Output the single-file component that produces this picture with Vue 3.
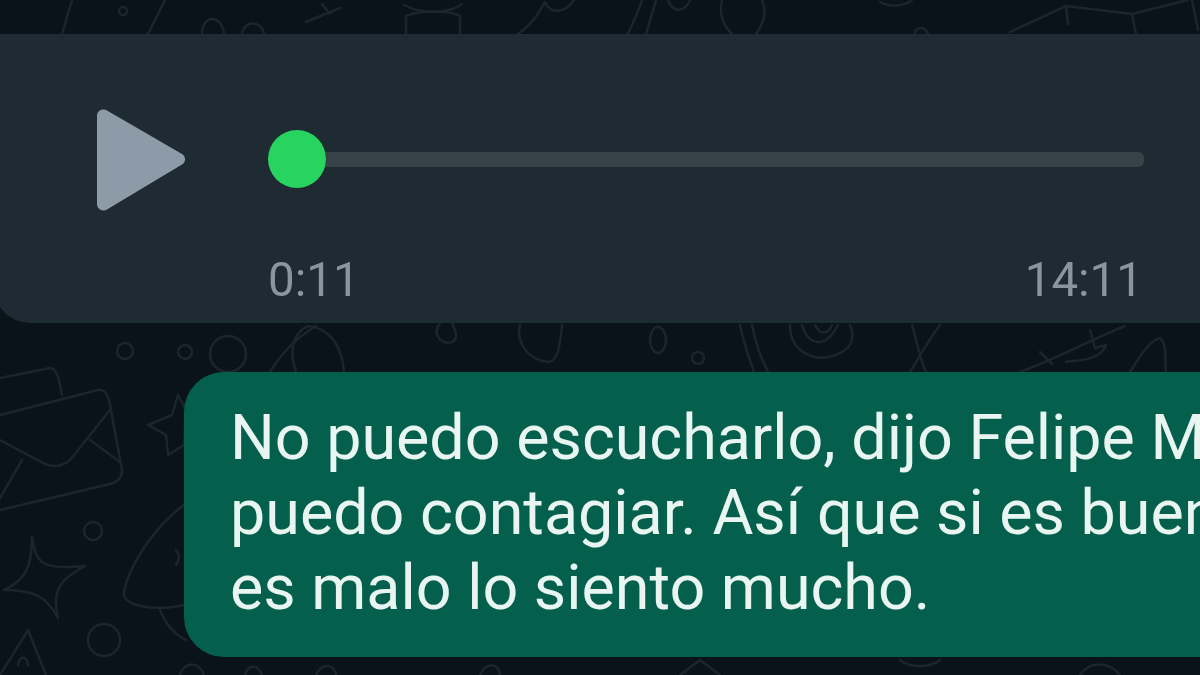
<template>
  <main class="chat">
    <svg class="doodles" viewBox="0 0 1200 675" xmlns="http://www.w3.org/2000/svg" fill="none">
      <!-- top strip -->
      <path d="M72 0L62 34M165 0L148 34" />
      <circle cx="123" cy="11" r="4" />
      <path d="M202 34C202 14 222 14 224 34M242 34C244 20 262 20 264 34" />
      <path d="M306 22L340 8M322 4L330 14" />
      <path d="M406 34V16C420 10 450 10 460 16V34M404 5C420 14 450 14 462 4" />
      <path d="M518 34C535 22 540 10 545 2C550 14 565 14 574 0" />
      <path d="M628 34C634 20 640 8 642 0M646 34C650 20 654 8 656 0M668 0C672 12 684 14 690 0" />
      <path d="M722 0C718 16 724 26 732 34M762 0C768 14 762 26 756 34" />
      <path d="M880 2C890 8 905 6 912 0M915 34C915 26 925 26 928 34" />
      <path d="M1010 32L1066 6L1132 14L1188 0M1066 6L1068 24M1132 14L1136 34M1192 0L1198 30" />
      <!-- strip between the two bubbles -->
      <circle cx="125" cy="351" r="8" />
      <circle cx="185" cy="352" r="7" />
      <circle cx="228" cy="354" r="18" />
      <path d="M270 372C282 352 296 338 316 326M296 372C288 350 294 332 308 326C330 328 342 346 344 372" />
      <path d="M440 323C430 336 445 346 452 342C460 338 454 328 452 323" />
      <path d="M520 325C516 340 526 360 548 362C558 362 560 345 562 325" />
      <ellipse cx="658" cy="340" rx="8" ry="13" />
      <circle cx="698" cy="358" r="6" />
      <path d="M740 325C744 345 750 360 754 372M752 325C756 345 762 360 768 372" />
      <path d="M790 325C790 352 815 364 838 354C858 346 852 330 850 325M802 325C808 345 825 350 838 325M815 325C820 335 828 335 832 325" />
      <path d="M912 325C918 345 920 360 926 372M940 325C925 345 918 360 910 372" />
      <path d="M1020 372C1050 362 1090 340 1125 326M1040 352L1052 364M1066 362C1074 360 1100 362 1106 345L1095 348L1090 330" />
      <path d="M1130 372C1140 356 1150 340 1160 338C1168 345 1164 360 1166 372" />
      <!-- left column -->
      <path d="M0 378L50 368C58 368 60 385 62 395" />
      <path d="M0 415L98 390C106 389 108 396 110 405L122 470C122 478 118 482 110 484L0 510" />
      <path d="M0 440L45 464C55 468 62 466 70 460L110 410M22 460L0 498M90 440L120 462" />
      <path d="M148 425L172 415L178 395L186 410L184 445L168 455L166 435Z" />
      <circle cx="93" cy="531" r="9" />
      <path d="M32 537C36 565 44 570 85 566C58 580 52 592 58 618C46 596 34 590 4 590C26 580 32 566 32 537Z" />
      <circle cx="104" cy="640" r="16" />
      <path d="M0 675L28 630L46 675M18 665C20 655 26 655 28 665" />
      <path d="M184 505C150 530 128 570 124 592C122 605 150 612 184 605M160 610C166 625 176 635 186 640M176 550C180 555 180 560 176 565" />
      <!-- bottom strip -->
      <path d="M180 675C184 662 198 660 204 675M245 675C248 664 258 664 262 675M316 675C322 662 334 664 336 675" />
      <path d="M480 675C486 662 498 662 500 675M680 675L700 660L720 675M900 660C910 668 930 668 940 660M1080 675C1090 660 1110 662 1120 675" />
    </svg>

    <section class="voice-card">
      <div class="player">
        <svg class="play-icon" viewBox="0 0 90 102" xmlns="http://www.w3.org/2000/svg">
          <path d="M1 7C1 2 6 -1 11 1.500L86 45C90 47.500 90 53 86 55.500L11 100.500C6 103 1 100 1 95Z" />
        </svg>
        <div class="timeline">
          <div class="track">
            <span class="knob"></span>
            <span class="line"></span>
          </div>
          <div class="times">
            <span>0:11</span>
            <span>14:11</span>
          </div>
        </div>
      </div>
    </section>

    <section class="text-bubble">
      <p>No puedo escucharlo, dijo Felipe M</p>
      <p>puedo contagiar. Así que si es buen</p>
      <p>es malo lo siento mucho.</p>
    </section>
  </main>
</template>

<script setup>
</script>

<style>
html, body { background: #0a1319; }
</style>

<style scoped>
.chat {
  position: relative;
  width: 1200px;
  height: 675px;
  overflow: hidden;
  display: flex;
  flex-direction: column;
  background: #0a1319;
  font-family: Roboto, "Liberation Sans", sans-serif;
  filter: blur(0.7px);
}

.doodles {
  position: absolute;
  inset: 0;
  width: 1200px;
  height: 675px;
  stroke: #1b252b;
  stroke-width: 2.5;
  stroke-linecap: round;
  stroke-linejoin: round;
}

.voice-card {
  position: relative;
  flex: none;
  height: 289px;
  margin: 34px -40px 0 -6px;
  padding: 75px 96px 0 102px;
  box-sizing: border-box;
  background: #1f2b32;
  border-radius: 6px 30px 30px 36px;
}

.player {
  display: flex;
  gap: 82px;
}

.play-icon {
  flex: none;
  width: 90px;
  height: 102px;
  fill: #8c9ba7;
}

.timeline {
  flex: 1;
  padding-top: 21px;
}

.track {
  display: flex;
  align-items: center;
  height: 58px;
}

.knob {
  flex: none;
  width: 58px;
  height: 58px;
  border-radius: 50%;
  background: #27d45f;
}

.line {
  flex: 1;
  height: 15px;
  border-radius: 0 6px 6px 0;
  background: #384249;
}

.times {
  display: flex;
  justify-content: space-between;
  margin-top: 64px;
  padding-right: 1px;
  font-size: 47.5px;
  line-height: 56px;
  color: #8a969d;
}

.text-bubble {
  position: relative;
  flex: none;
  height: 285px;
  margin: 49px -40px 0 184px;
  padding: 28px 0 0 46px;
  box-sizing: border-box;
  background: #04604d;
  border-radius: 40px;
  color: #e9f5f1;
  font-size: 62.8px;
  line-height: 75px;
  white-space: nowrap;
  overflow: hidden;
}

.text-bubble p {
  margin: 0;
}
</style>
